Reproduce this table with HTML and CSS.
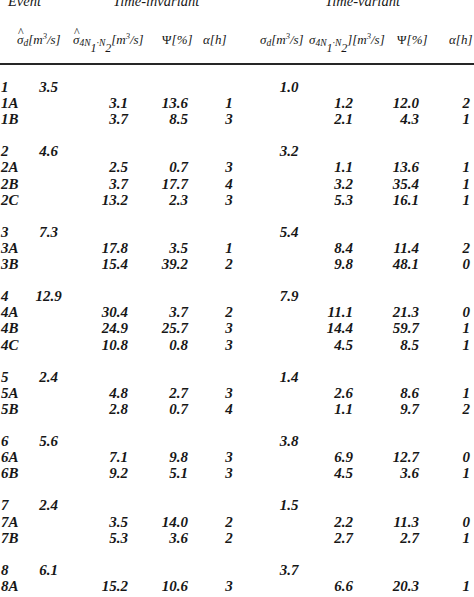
FILE: index.html
```html
<!DOCTYPE html>
<html lang="en">
<head>
<meta charset="utf-8">
<title>Event table</title>
<link rel="stylesheet" href="styles.css">
</head>
<body>
<div class="sheet">
  <div class="title-row">
    <span class="t-event">Event</span>
    <span class="t-ti">Time-invariant</span>
    <span class="t-tv">Time-variant</span>
  </div>
  <div class="head-row">
    <span class="h h1"><span class="hat">σ</span><sub>d</sub>[m<sup>3</sup>/s]</span>
    <span class="h h2"><span class="hat">σ</span><sub>4N<sub class="ss">1</sub>·N<sub class="ss">2</sub></sub>[m<sup>3</sup>/s]</span>
    <span class="h h3"><span class="up">Ψ</span>[%]</span>
    <span class="h h4">α[h]</span>
    <span class="h h5">σ<sub>d</sub>[m<sup>3</sup>/s]</span>
    <span class="h h6">σ<sub>4N<sub class="ss">1</sub>·N<sub class="ss">2</sub></sub>][m<sup>3</sup>/s]</span>
    <span class="h h7"><span class="up">Ψ</span>[%]</span>
    <span class="h h8">α[h]</span>
  </div>
  <div class="rule"></div>
  <table class="data">
    <colgroup>
      <col class="c1"><col class="c2"><col class="c3"><col class="c4"><col class="c5"><col class="c6"><col class="c7"><col class="c8"><col class="c9">
    </colgroup>
    <tbody>
      <tr><td class="ev">1</td><td class="ctr">3.5</td><td></td><td></td><td></td><td class="ctr">1.0</td><td></td><td></td><td></td></tr>
      <tr><td class="ev">1A</td><td></td><td class="r">3.1</td><td class="r">13.6</td><td class="ctr">1</td><td></td><td class="r">1.2</td><td class="r">12.0</td><td class="r">2</td></tr>
      <tr><td class="ev">1B</td><td></td><td class="r">3.7</td><td class="r">8.5</td><td class="ctr">3</td><td></td><td class="r">2.1</td><td class="r">4.3</td><td class="r">1</td></tr>
      <tr class="gap"><td colspan="9"></td></tr>
      <tr><td class="ev">2</td><td class="ctr">4.6</td><td></td><td></td><td></td><td class="ctr">3.2</td><td></td><td></td><td></td></tr>
      <tr><td class="ev">2A</td><td></td><td class="r">2.5</td><td class="r">0.7</td><td class="ctr">3</td><td></td><td class="r">1.1</td><td class="r">13.6</td><td class="r">1</td></tr>
      <tr><td class="ev">2B</td><td></td><td class="r">3.7</td><td class="r">17.7</td><td class="ctr">4</td><td></td><td class="r">3.2</td><td class="r">35.4</td><td class="r">1</td></tr>
      <tr><td class="ev">2C</td><td></td><td class="r">13.2</td><td class="r">2.3</td><td class="ctr">3</td><td></td><td class="r">5.3</td><td class="r">16.1</td><td class="r">1</td></tr>
      <tr class="gap"><td colspan="9"></td></tr>
      <tr><td class="ev">3</td><td class="ctr">7.3</td><td></td><td></td><td></td><td class="ctr">5.4</td><td></td><td></td><td></td></tr>
      <tr><td class="ev">3A</td><td></td><td class="r">17.8</td><td class="r">3.5</td><td class="ctr">1</td><td></td><td class="r">8.4</td><td class="r">11.4</td><td class="r">2</td></tr>
      <tr><td class="ev">3B</td><td></td><td class="r">15.4</td><td class="r">39.2</td><td class="ctr">2</td><td></td><td class="r">9.8</td><td class="r">48.1</td><td class="r">0</td></tr>
      <tr class="gap"><td colspan="9"></td></tr>
      <tr><td class="ev">4</td><td class="ctr">12.9</td><td></td><td></td><td></td><td class="ctr">7.9</td><td></td><td></td><td></td></tr>
      <tr><td class="ev">4A</td><td></td><td class="r">30.4</td><td class="r">3.7</td><td class="ctr">2</td><td></td><td class="r">11.1</td><td class="r">21.3</td><td class="r">0</td></tr>
      <tr><td class="ev">4B</td><td></td><td class="r">24.9</td><td class="r">25.7</td><td class="ctr">3</td><td></td><td class="r">14.4</td><td class="r">59.7</td><td class="r">1</td></tr>
      <tr><td class="ev">4C</td><td></td><td class="r">10.8</td><td class="r">0.8</td><td class="ctr">3</td><td></td><td class="r">4.5</td><td class="r">8.5</td><td class="r">1</td></tr>
      <tr class="gap"><td colspan="9"></td></tr>
      <tr><td class="ev">5</td><td class="ctr">2.4</td><td></td><td></td><td></td><td class="ctr">1.4</td><td></td><td></td><td></td></tr>
      <tr><td class="ev">5A</td><td></td><td class="r">4.8</td><td class="r">2.7</td><td class="ctr">3</td><td></td><td class="r">2.6</td><td class="r">8.6</td><td class="r">1</td></tr>
      <tr><td class="ev">5B</td><td></td><td class="r">2.8</td><td class="r">0.7</td><td class="ctr">4</td><td></td><td class="r">1.1</td><td class="r">9.7</td><td class="r">2</td></tr>
      <tr class="gap"><td colspan="9"></td></tr>
      <tr><td class="ev">6</td><td class="ctr">5.6</td><td></td><td></td><td></td><td class="ctr">3.8</td><td></td><td></td><td></td></tr>
      <tr><td class="ev">6A</td><td></td><td class="r">7.1</td><td class="r">9.8</td><td class="ctr">3</td><td></td><td class="r">6.9</td><td class="r">12.7</td><td class="r">0</td></tr>
      <tr><td class="ev">6B</td><td></td><td class="r">9.2</td><td class="r">5.1</td><td class="ctr">3</td><td></td><td class="r">4.5</td><td class="r">3.6</td><td class="r">1</td></tr>
      <tr class="gap"><td colspan="9"></td></tr>
      <tr><td class="ev">7</td><td class="ctr">2.4</td><td></td><td></td><td></td><td class="ctr">1.5</td><td></td><td></td><td></td></tr>
      <tr><td class="ev">7A</td><td></td><td class="r">3.5</td><td class="r">14.0</td><td class="ctr">2</td><td></td><td class="r">2.2</td><td class="r">11.3</td><td class="r">0</td></tr>
      <tr><td class="ev">7B</td><td></td><td class="r">5.3</td><td class="r">3.6</td><td class="ctr">2</td><td></td><td class="r">2.7</td><td class="r">2.7</td><td class="r">1</td></tr>
      <tr class="gap"><td colspan="9"></td></tr>
      <tr><td class="ev">8</td><td class="ctr">6.1</td><td></td><td></td><td></td><td class="ctr">3.7</td><td></td><td></td><td></td></tr>
      <tr><td class="ev">8A</td><td></td><td class="r">15.2</td><td class="r">10.6</td><td class="ctr">3</td><td></td><td class="r">6.6</td><td class="r">20.3</td><td class="r">1</td></tr>
    </tbody>
  </table>
</div>
</body>
</html>
```

FILE: styles.css
```css
html {
  overflow: hidden;
  background: #ffffff;
}

body {
  margin: 0;
  background: #ffffff;
  color: #171717;
  font-family: "Liberation Serif", "Times New Roman", serif;
  font-style: italic;
  font-size: 14px;
}

.sheet {
  width: 474px;
  overflow: hidden;
  height: 597px;
}

.title-row {
  display: grid;
  grid-template-columns: 8px 29px 76px 78px 134px 67px 82px;
  height: 16px;
  line-height: 16px;
  margin-top: -7px;
  font-size: 14.5px;
  white-space: nowrap;
}

.t-event { grid-column: 2; text-align: center; }
.t-ti { grid-column: 4; text-align: center; }
.t-tv { grid-column: 6; text-align: center; }

.head-row {
  display: grid;
  grid-template-columns: 17px 46px 10px 79px 10px 21px 20px 30px 27px 42px 7px 80px 8px 25px 27px 25px;
  height: 16px;
  line-height: 16px;
  margin-top: 23px;
  font-size: 13px;
  white-space: nowrap;
}

.h { text-align: left; }
.h1 { grid-column: 2; }
.h2 { grid-column: 4; }
.h3 { grid-column: 6; }
.h4 { grid-column: 8; }
.h5 { grid-column: 10; }
.h6 { grid-column: 12; }
.h7 { grid-column: 14; }
.h8 { grid-column: 16; }

.head-row sub {
  font-size: 9.5px;
  vertical-align: -2px;
  line-height: 0;
}

.head-row sub .ss {
  font-size: 12px;
  vertical-align: -6px;
}

.head-row sup {
  font-size: 8.5px;
  vertical-align: 5px;
  line-height: 0;
}

.up { font-style: normal; }

.hat {
  position: relative;
  display: inline-block;
}

.hat::after {
  content: "^";
  position: absolute;
  left: 1px;
  top: -8px;
  font-size: 12px;
  font-style: normal;
}

.rule {
  height: 2px;
  background: #262626;
  margin-top: 15px;
}

.data {
  margin-top: 14px;
  width: 474px;
  table-layout: fixed;
  border-collapse: collapse;
  font-weight: bold;
  font-size: 15px;
}

.c1 { width: 30px; }
.c2 { width: 37px; }
.c3 { width: 65px; }
.c4 { width: 60px; }
.c5 { width: 74px; }
.c6 { width: 46px; }
.c7 { width: 45px; }
.c8 { width: 66px; }
.c9 { width: 51px; }

.data td {
  padding: 0;
  height: 16.1px;
  line-height: 16.1px;
  white-space: nowrap;
}

.data td.ev { padding-left: 1px; text-align: left; }
.data td.ctr { text-align: center; }
.data td.r { text-align: right; padding-right: 4px; }
```
